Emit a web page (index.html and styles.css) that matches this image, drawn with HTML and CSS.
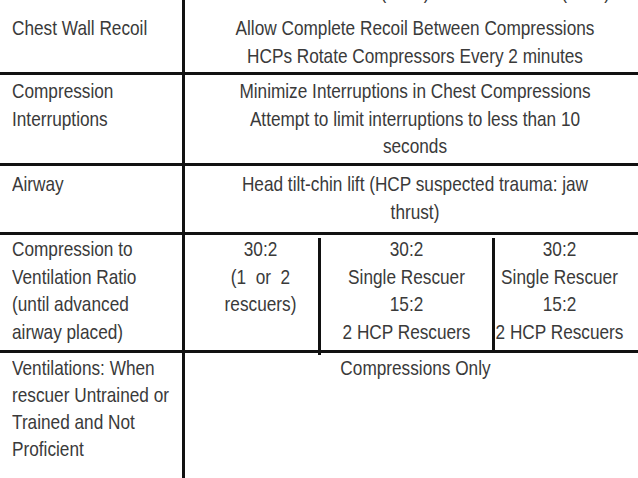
FILE: index.html
```html
<!DOCTYPE html>
<html lang="en">
<head>
<meta charset="utf-8">
<title>CPR Summary Table</title>
<link rel="stylesheet" href="styles.css">
</head>
<body>
<div class="table">
  <div class="row r0">
    <div class="label"><div class="t"></div></div>
    <div class="split">
      <div class="sub s1"><div class="t"></div></div>
      <div class="sub s2"><div class="t">(5 cm)</div></div>
      <div class="sub s3"><div class="t">(4 cm)</div></div>
    </div>
  </div>
  <div class="row r1">
    <div class="label"><div class="t">Chest Wall Recoil</div></div>
    <div class="value"><div class="t">Allow Complete Recoil Between Compressions<br>HCPs Rotate Compressors Every 2 minutes</div></div>
  </div>
  <div class="row r2">
    <div class="label"><div class="t">Compression<br>Interruptions</div></div>
    <div class="value"><div class="t">Minimize Interruptions in Chest Compressions<br>Attempt to limit interruptions to less than 10<br>seconds</div></div>
  </div>
  <div class="row r3">
    <div class="label"><div class="t">Airway</div></div>
    <div class="value"><div class="t">Head tilt-chin lift (HCP suspected trauma: jaw<br>thrust)</div></div>
  </div>
  <div class="row r4">
    <div class="label"><div class="t">Compression to<br>Ventilation Ratio<br>(until advanced<br>airway placed)</div></div>
    <div class="split">
      <div class="sub s1"><div class="t">30:2<br>(1&nbsp; or&nbsp; 2<br>rescuers)</div></div>
      <div class="sub s2 lined"><div class="t">30:2<br>Single Rescuer<br>15:2<br>2 HCP Rescuers</div></div>
      <div class="sub s3 lined"><div class="t">30:2<br>Single Rescuer<br>15:2<br>2 HCP Rescuers</div></div>
    </div>
  </div>
  <div class="row r5">
    <div class="label"><div class="t">Ventilations: When<br>rescuer Untrained or<br>Trained and Not<br>Proficient</div></div>
    <div class="value only"><div class="t">Compressions Only</div></div>
  </div>
</div>
</body>
</html>
```

FILE: styles.css
```css
html, body {
  margin: 0;
  padding: 0;
  background: #ffffff;
}

body {
  width: 638px;
  height: 478px;
  overflow: hidden;
  font-family: "Liberation Sans", Arial, sans-serif;
  font-size: 21px;
  line-height: 27.5px;
  color: #3a3a3a;
}

.table {
  margin-top: -18px;
}

.row {
  display: grid;
  grid-template-columns: 185px minmax(0, 1fr);
  border-bottom: 3px solid #111111;
}

.row > div {
  min-width: 0;
}

/* condensed text: laid out wide, then narrowed to the cell */
.t {
  width: 121.95%;
  transform: scaleX(0.82);
  transform-origin: 0 0;
  white-space: nowrap;
}

.label {
  border-right: 3px solid #111111;
  padding-left: 12px;
}

.value {
  text-align: center;
  padding-left: 25px;
  padding-right: 18px;
}

.split {
  display: grid;
  grid-template-columns: 133px 174px minmax(0, 1fr);
}

.sub {
  text-align: center;
  min-width: 0;
}

.s1 {
  padding-left: 18px;
}

.s3 {
  padding-right: 14px;
}

.lined {
  border-left: 3px solid #111111;
  margin-top: 3px;
}

.lined .t {
  margin-top: -3px;
}

.r4 .s2.lined {
  margin-bottom: -5px;
}

.r0 {
  height: 18px;
  line-height: 20px;
  border-bottom: none;
}

.r0 .label {
  border-right: none;
}

.r0 .s3 {
  text-align: right;
  padding-right: 28px;
}

.r1 {
  height: 72px;
}

.r1 > div {
  padding-top: 14px;
}

.r2 {
  height: 88px;
}

.r2 > div {
  padding-top: 2px;
}

.r3 {
  height: 66px;
}

.r3 > div {
  padding-top: 4px;
}

.r4 {
  height: 115px;
}

.r5 {
  height: 140px;
  border-bottom: none;
}

.r5 > div {
  padding-top: 1px;
}

.r5 .t {
  line-height: 27px;
}

.only {
  padding-left: 8px;
  padding-right: 0;
}
```
